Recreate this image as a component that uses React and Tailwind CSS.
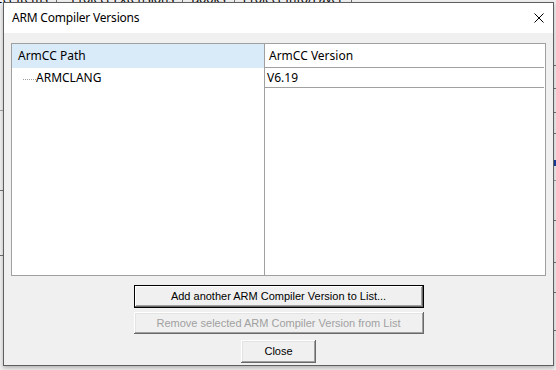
import React from "react";

function Btn({ children, className = "", def = false, disabled = false }) {
  return (
    <div
      className={
        "flex items-center justify-center font-['Liberation_Sans',Arial,sans-serif] text-[11px] bg-[#f0f0f0] " +
        (def
          ? "border border-black shadow-[inset_-1px_-1px_0_#696969,inset_1px_1px_0_#ffffff,inset_-2px_-2px_0_#a0a0a0] "
          : "shadow-[inset_-1px_-1px_0_#696969,inset_1px_1px_0_#ffffff,inset_-2px_-2px_0_#a0a0a0,inset_2px_2px_0_#e3e3e3] ") +
        (disabled ? "text-[#a0a0a0] " : "text-black ") +
        className
      }
    >
      {children}
    </div>
  );
}

export default function App() {
  return (
    <div className="relative w-[556px] h-[370px] overflow-hidden bg-[#f0f0f0] font-['Noto_Sans',sans-serif]">
      {/* background window fragments */}
      <div className="absolute left-0 top-[-10px] flex items-center gap-[8px] whitespace-nowrap text-[12px] text-black">
        <span className="ml-[-4px]">ect Items</span>
        <span className="h-[14px] w-px bg-[#707070]" />
        <span className="ml-[6px]">Project Extensions</span>
        <span className="h-[14px] w-px bg-[#707070]" />
        <span>Books</span>
        <span className="h-[14px] w-px bg-[#707070]" />
        <span>Project Info/Layer</span>
        <span className="h-[14px] w-px bg-[#707070]" />
      </div>
      <div className="absolute left-0 top-[110px] h-px w-[3px] bg-[#a0a0a0]" />
      <div className="absolute left-0 top-[190px] h-px w-[3px] bg-[#707070]" />
      <div className="absolute left-0 top-[255px] h-px w-[3px] bg-[#707070]" />
      <div className="absolute right-0 top-[65px] h-px w-[3px] bg-[#707070]" />
      <div className="absolute right-0 top-[88px] h-px w-[3px] bg-[#707070]" />
      <div className="absolute right-0 top-[112px] h-px w-[3px] bg-[#707070]" />
      <div className="absolute right-0 top-[133px] h-px w-[3px] bg-[#707070]" />
      <div className="absolute right-0 top-[160px] h-[6px] w-[2px] bg-[#1a3fa0]" />
      <div className="absolute right-0 top-[180px] h-px w-[3px] bg-[#a0a0a0]" />
      <div className="absolute right-0 top-[220px] h-px w-[3px] bg-[#707070]" />
      <div className="absolute right-0 top-[262px] h-px w-[3px] bg-[#707070]" />
      <div className="absolute right-0 top-[292px] h-px w-[3px] bg-[#707070]" />
      <div className="absolute right-0 top-[330px] h-px w-[3px] bg-[#707070]" />

      {/* dialog */}
      <div className="relative ml-[3px] mt-[2px] w-[551px] h-[364px] border border-[#5f5f5f] bg-[#f0f0f0] flex flex-col shadow-[0_2px_4px_rgba(0,0,0,0.25)]">
        <div className="h-[30px] bg-white flex items-center justify-between pl-[8px] pr-[9px]">
          <span className="text-[12px] text-black tracking-[-0.2px]">ARM Compiler Versions</span>
          <svg width="10" height="10" viewBox="0 0 10 10" className="mb-[1px]">
            <path d="M0.5 0.5 L9.5 9.5 M9.5 0.5 L0.5 9.5" stroke="#000" strokeWidth="1" fill="none" />
          </svg>
        </div>

        <div className="mx-[7px] mt-[10px] h-[233px] border border-[#a0a0a0] bg-white flex text-[12px] text-black">
          <div className="w-[252px] flex flex-col">
            <div className="h-[24px] bg-[#d9ebf9] flex items-center pl-[6px]">ArmCC Path</div>
            <div className="h-[20px] flex items-center pl-[11px]">
              <span className="w-[13px] border-t border-dotted border-[#a0a0a0] mt-[2px]" />
              <span>ARMCLANG</span>
            </div>
          </div>
          <div className="w-px bg-[#a0a0a0]" />
          <div className="flex-1 flex flex-col">
            <div className="h-[24px] flex items-center pl-[4px] border-b border-[#a0a0a0] mr-[1px]">ArmCC Version</div>
            <div className="h-[20px] flex items-center pl-[2px] border-b border-[#a0a0a0] mr-[1px]">V6.19</div>
          </div>
        </div>

        <div className="flex flex-col items-center">
          <Btn def className="mt-[9px] w-[290px] h-[23px]">Add another ARM Compiler Version to List...</Btn>
          <Btn disabled className="mt-[4px] w-[290px] h-[22px]">Remove selected ARM Compiler Version from List</Btn>
          <Btn className="mt-[6px] w-[75px] h-[23px]">Close</Btn>
        </div>
      </div>
    </div>
  );
}
